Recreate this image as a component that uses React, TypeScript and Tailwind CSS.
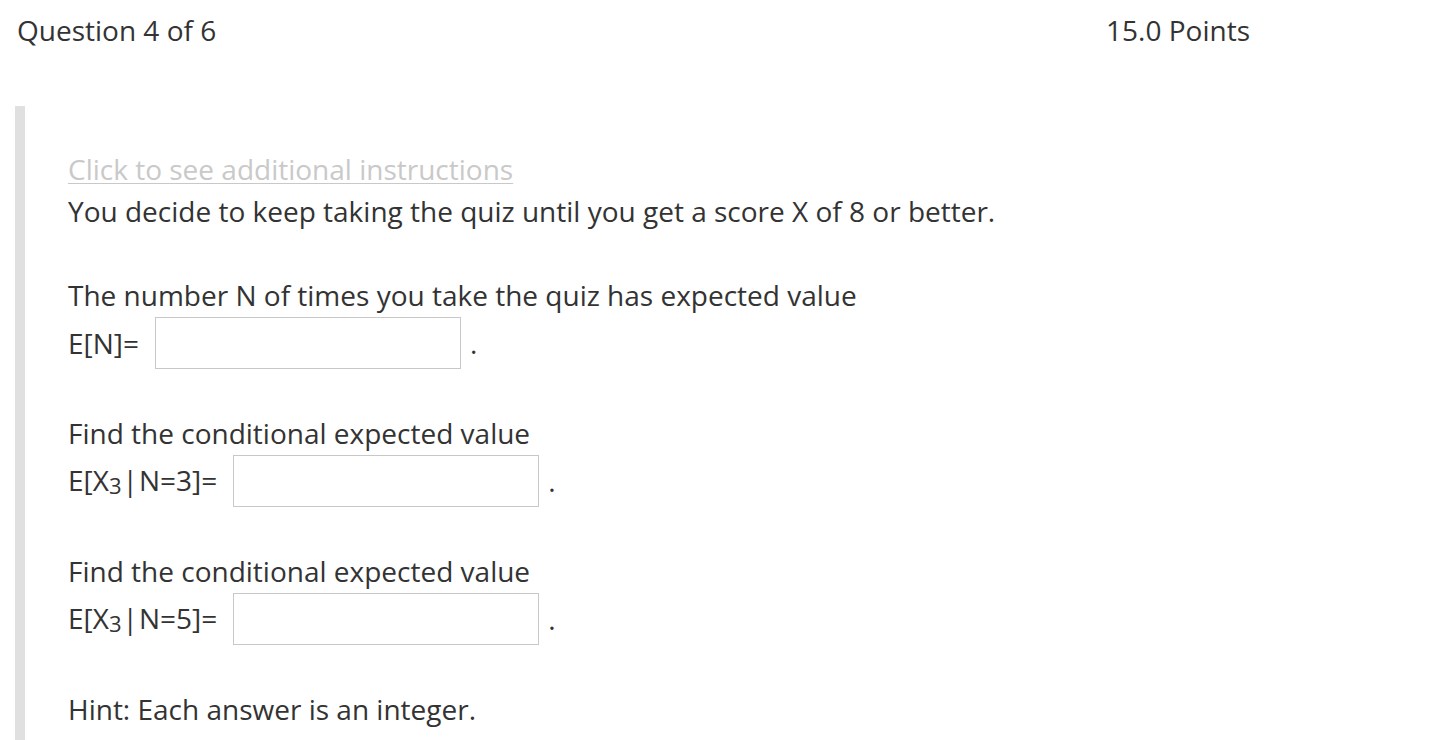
const font = { fontFamily: '"Open Sans", sans-serif' };

function AnswerRow({ label }: { label: React.ReactNode }) {
  return (
    <div className="flex items-center h-[52px] mt-[1px] -mb-[1px]">
      <span className="mr-[16px]">{label}</span>
      <input
        type="text"
        className="w-[306px] h-[52px] border border-[#c8c8c8] bg-white outline-none"
      />
      <span className="ml-[9px]">.</span>
    </div>
  );
}

function XGiven({ n }: { n: number }) {
  return (
    <>
      E[X<span className="text-[22px] relative top-[3px]">3</span>
      <span className="mx-[1px]">|</span>N={n}]=
    </>
  );
}

export default function App() {
  return (
    <div style={font} className="bg-white text-[#333] min-h-[740px] text-[28px]">
      <div className="flex justify-between items-center h-[59px] pl-[17px] pr-[196px]">
        <span>Question 4 of 6</span>
        <span>15.0 Points</span>
      </div>
      <div className="ml-[15px] mt-[47px] border-l-[10px] border-[#e0e0e0] pl-[43px] pt-[42px] pb-[20px] leading-[42px]">
        <a className="text-[#c9c9c9] underline underline-offset-[3px] decoration-1 block">
          Click to see additional instructions
        </a>
        <p>You decide to keep taking the quiz until you get a score X of 8 or better.</p>
        <p className="mt-[42px]">The number N of times you take the quiz has expected value</p>
        <AnswerRow label="E[N]=" />
        <p className="mt-[44px]">Find the conditional expected value</p>
        <AnswerRow label={<XGiven n={3} />} />
        <p className="mt-[44px]">Find the conditional expected value</p>
        <AnswerRow label={<XGiven n={5} />} />
        <p className="mt-[44px]">Hint: Each answer is an integer.</p>
      </div>
    </div>
  );
}
